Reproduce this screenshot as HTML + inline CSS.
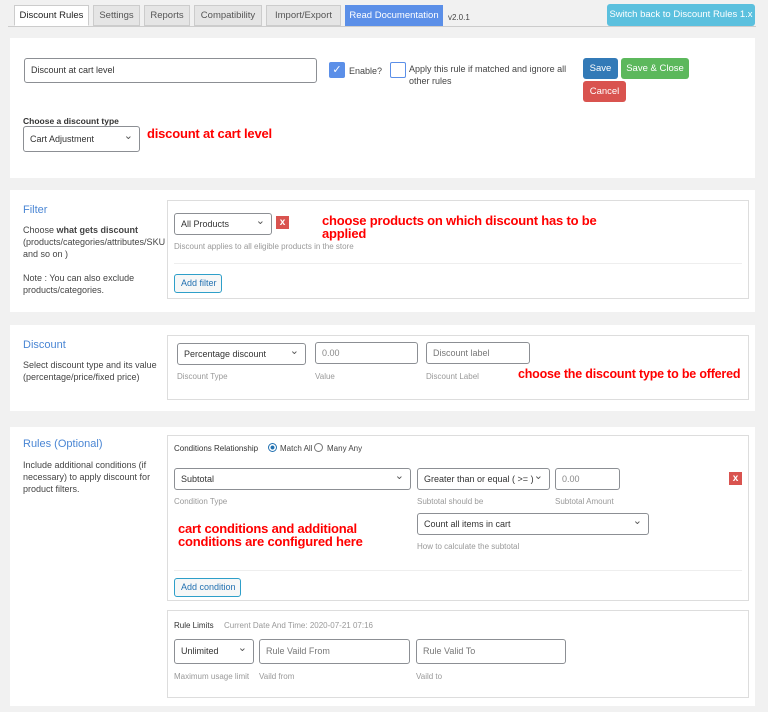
<!DOCTYPE html><html><head><style>
body{margin:0;width:768px;height:712px;background:#f1f1f1;font-family:"Liberation Sans",sans-serif;font-size:9px;color:#444;position:relative;overflow:hidden}
div,span,a{position:absolute;box-sizing:border-box}
.tab{top:5px;height:21px;border:1px solid #ccc;background:#e5e5e5;color:#555;font-size:9.5px;line-height:19px;text-align:center}
.panel{background:#fff;left:10px;width:745px}
.inp{border:1px solid #8c8f94;border-radius:3px;background:#fff;padding-left:6px;color:#333;font-size:9px}
.sel::after{content:"⌄";position:absolute;right:6px;top:-3px;font-size:11px;color:#555}
.lbl{color:#999;font-size:8px}
.box{border:1px solid #ddd;background:#fff}
.red{color:#f00;font-weight:bold;font-size:13px;line-height:13px;letter-spacing:-0.2px}
.h{color:#4a86d4;font-size:11px}
.btn{color:#fff;border-radius:3px;text-align:center;font-size:9.5px}
</style></head><body>
<div style="left:8px;top:26px;width:748px;height:1px;background:#ccc"></div>
<div class="tab" style="left:14px;width:75px;background:#fff;color:#222;border-bottom-color:#fff">Discount Rules</div>
<div class="tab" style="left:93px;width:47px">Settings</div>
<div class="tab" style="left:144px;width:46px">Reports</div>
<div class="tab" style="left:194px;width:68px">Compatibility</div>
<div class="tab" style="left:266px;width:75px">Import/Export</div>
<div class="tab" style="left:345px;width:98px;background:#5b8fe8;color:#fff;border-color:#5b8fe8">Read Documentation</div>
<span style="left:448px;top:13px;font-size:8px">v2.0.1</span>
<div class="btn" style="left:607px;top:4px;width:148px;height:22px;line-height:22px;background:#5bc0de">Switch back to Discount Rules 1.x</div>

<div class="panel" style="top:38px;height:140px"></div>
<div class="inp" style="left:24px;top:58px;width:293px;height:25px;line-height:23px">Discount at cart level</div>
<div style="left:329px;top:62px;width:16px;height:16px;background:#5b8fe8;border-radius:2px;color:#fff;text-align:center;line-height:16px;font-size:11px">✓</div>
<span style="left:349px;top:66px">Enable?</span>
<div style="left:390px;top:62px;width:16px;height:16px;border:1px solid #5b8fe8;border-radius:2px"></div>
<span style="left:409px;top:63px;width:178px;line-height:12px">Apply this rule if matched and ignore all other rules</span>
<div class="btn" style="left:583px;top:58px;width:35px;height:21px;line-height:21px;background:#337ab7">Save</div>
<div class="btn" style="left:621px;top:58px;width:68px;height:21px;line-height:21px;background:#5cb85c">Save &amp; Close</div>
<div class="btn" style="left:583px;top:81px;width:43px;height:21px;line-height:21px;background:#d9534f">Cancel</div>
<span style="left:23px;top:116px;font-weight:bold;font-size:8.5px;color:#333">Choose a discount type</span>
<div class="inp sel" style="left:23px;top:126px;width:117px;height:26px;line-height:24px">Cart Adjustment</div>
<span class="red" style="left:147px;top:127px">discount at cart level</span>

<div class="panel" style="top:190px;height:122px"></div>
<span class="h" style="left:23px;top:204px">Filter</span>
<span style="left:23px;top:224px;width:140px;line-height:12px">Choose <b>what gets discount</b> (products/categories/attributes/SKU and so on )<br><br>Note : You can also exclude products/categories.</span>
<div class="box" style="left:167px;top:200px;width:582px;height:99px"></div>
<div class="inp sel" style="left:174px;top:213px;width:98px;height:22px;line-height:20px">All Products</div>
<div style="left:276px;top:216px;width:13px;height:13px;background:#d9534f;color:#fff;font-weight:bold;text-align:center;line-height:13px;font-size:10px">x</div>
<span class="lbl" style="left:174px;top:242px">Discount applies to all eligible products in the store</span>
<div style="left:174px;top:263px;width:568px;height:1px;background:#eee"></div>
<div class="inp" style="left:174px;top:274px;width:48px;height:19px;line-height:17px;border-color:#2e9fc9;color:#2271b1;background:#f6f7f7">Add filter</div>
<span class="red" style="left:322px;top:214px;width:300px">choose products on which discount has to be applied</span>

<div class="panel" style="top:325px;height:86px"></div>
<span class="h" style="left:23px;top:339px">Discount</span>
<span style="left:23px;top:359px;width:140px;line-height:12px">Select discount type and its value (percentage/price/fixed price)</span>
<div class="box" style="left:167px;top:335px;width:582px;height:65px"></div>
<div class="inp sel" style="left:177px;top:343px;width:129px;height:22px;line-height:20px">Percentage discount</div>
<div class="inp" style="left:315px;top:342px;width:103px;height:22px;line-height:20px;color:#888">0.00</div>
<div class="inp" style="left:426px;top:342px;width:104px;height:22px;line-height:20px;color:#777">Discount label</div>
<span class="lbl" style="left:177px;top:372px">Discount Type</span>
<span class="lbl" style="left:315px;top:372px">Value</span>
<span class="lbl" style="left:426px;top:372px">Discount Label</span>
<span class="red" style="left:518px;top:368px;font-size:12.5px">choose the discount type to be offered</span>

<div class="panel" style="top:427px;height:279px"></div>
<span class="h" style="left:23px;top:438px">Rules (Optional)</span>
<span style="left:23px;top:459px;width:130px;line-height:12px">Include additional conditions (if necessary) to apply discount for product filters.</span>
<div class="box" style="left:167px;top:435px;width:582px;height:166px"></div>
<span style="left:174px;top:444px;font-size:8px;color:#333">Conditions Relationship</span>
<div style="left:268px;top:443px;width:9px;height:9px;border:1px solid #2271b1;border-radius:50%;background:radial-gradient(#2271b1 35%,#fff 45%)"></div>
<span style="left:280px;top:444px;font-size:8px">Match All</span>
<div style="left:314px;top:443px;width:9px;height:9px;border:1px solid #777;border-radius:50%"></div>
<span style="left:327px;top:444px;font-size:8px">Many Any</span>
<div class="inp sel" style="left:174px;top:468px;width:237px;height:22px;line-height:20px">Subtotal</div>
<div class="inp sel" style="left:417px;top:468px;width:133px;height:22px;line-height:20px">Greater than or equal ( &gt;= )</div>
<div class="inp" style="left:555px;top:468px;width:65px;height:22px;line-height:20px;color:#888">0.00</div>
<div style="left:729px;top:472px;width:13px;height:13px;background:#d9534f;color:#fff;font-weight:bold;text-align:center;line-height:13px;font-size:10px">x</div>
<span class="lbl" style="left:174px;top:497px">Condition Type</span>
<span class="lbl" style="left:417px;top:497px">Subtotal should be</span>
<span class="lbl" style="left:555px;top:497px">Subtotal Amount</span>
<div class="inp sel" style="left:417px;top:513px;width:232px;height:22px;line-height:20px">Count all items in cart</div>
<span class="lbl" style="left:417px;top:542px">How to calculate the subtotal</span>
<span class="red" style="left:178px;top:522px;line-height:13px">cart conditions and additional<br>conditions are configured here</span>
<div style="left:174px;top:570px;width:568px;height:1px;background:#eee"></div>
<div class="inp" style="left:174px;top:578px;width:67px;height:19px;line-height:17px;border-color:#2e9fc9;color:#2271b1;background:#f6f7f7">Add condition</div>
<div class="box" style="left:167px;top:610px;width:582px;height:88px"></div>
<span style="left:174px;top:621px;font-size:8px;color:#333">Rule Limits</span>
<span class="lbl" style="left:224px;top:621px">Current Date And Time: 2020-07-21 07:16</span>
<div class="inp sel" style="left:174px;top:639px;width:80px;height:25px;line-height:23px">Unlimited</div>
<div class="inp" style="left:259px;top:639px;width:151px;height:25px;line-height:23px;color:#777">Rule Vaild From</div>
<div class="inp" style="left:416px;top:639px;width:150px;height:25px;line-height:23px;color:#777">Rule Valid To</div>
<span class="lbl" style="left:174px;top:672px">Maximum usage limit</span>
<span class="lbl" style="left:259px;top:672px">Vaild from</span>
<span class="lbl" style="left:416px;top:672px">Vaild to</span>
</body></html>
